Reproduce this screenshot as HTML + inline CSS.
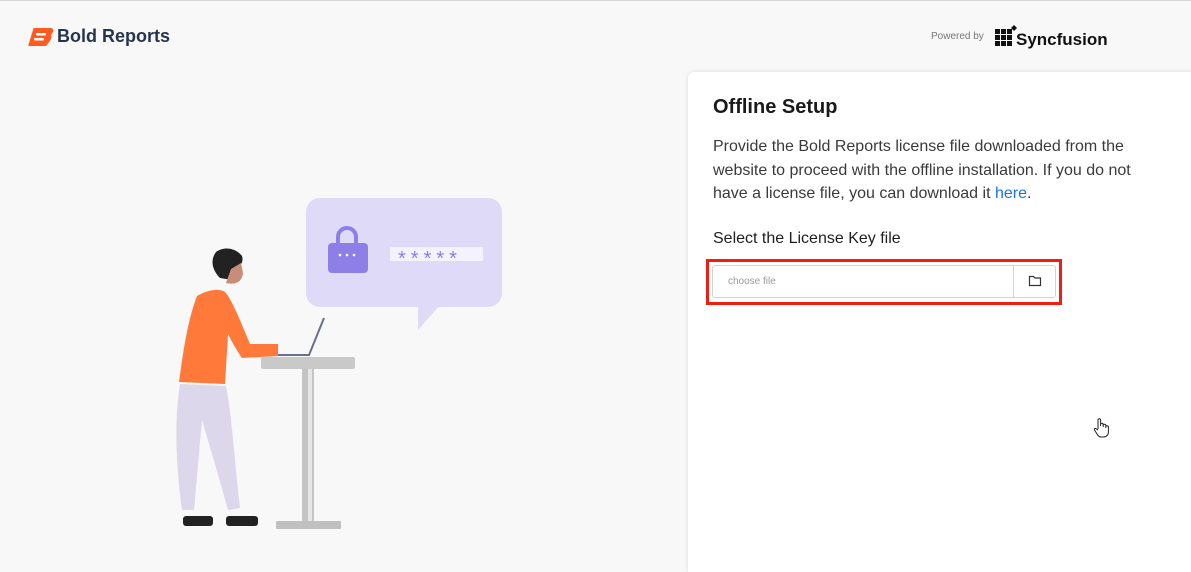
<!DOCTYPE html>
<html><head><meta charset="utf-8"><style>
*{margin:0;padding:0;box-sizing:border-box}
body{width:1191px;height:564px;background:#f8f8f8;font-family:"Liberation Sans",Arial,sans-serif;position:relative;overflow:hidden;border-top:1px solid #d6d6d6}
.abs{position:absolute}
.panel{left:688px;top:71px;width:510px;height:500px;background:#fff;border-radius:6px 0 0 0;box-shadow:0 0 4px rgba(0,0,0,.12)}
.t{color:#1f1f1f}
</style></head><body>
<svg class="abs" style="left:28px;top:26px" width="26" height="20" viewBox="0 0 26 20"><path d="M6 1h16c3 0 4 2 3 4l-2 3c1 2 0 5-2 7l-3 4H2c-2 0-2-1-1-3L5 3c0-1 1-2 1-2z" fill="#ff5a1f"/><rect x="8" y="6" width="10" height="2.5" rx="1" fill="#fff"/><rect x="6" y="11" width="10" height="2.5" rx="1" fill="#fff"/></svg>
<div class="abs" style="left:57px;top:25px;font-size:18px;font-weight:bold;color:#27344f">Bold Reports</div>
<div class="abs" style="left:931px;top:30px;font-size:10px;color:#777">Powered by</div>
<svg class="abs" style="left:995px;top:24px" width="24" height="22" viewBox="0 0 24 22"><g fill="#111"><rect x="0" y="4" width="5" height="5"/><rect x="6" y="4" width="5" height="5"/><rect x="0" y="10" width="5" height="5"/><rect x="6" y="10" width="5" height="5"/><rect x="12" y="10" width="5" height="5"/><rect x="0" y="16" width="5" height="5"/><rect x="6" y="16" width="5" height="5"/><rect x="12" y="16" width="5" height="5"/><rect x="12" y="4" width="5" height="5"/><path d="M19 0l3 3-3 3-3-3z"/></g></svg>
<div class="abs" style="left:1016px;top:29px;font-size:17px;font-weight:bold;color:#111;letter-spacing:0px">Syncfusion</div>

<svg class="abs" style="left:160px;top:190px" width="360" height="350" viewBox="0 0 360 350">
<rect x="146" y="7" width="196" height="109" rx="14" fill="#dedaf7"/>
<path d="M258 114l0 25 22-25z" fill="#dedaf7"/>
<path d="M178 53v-7a9 9 0 0 1 18 0v7" stroke="#8d7ee8" stroke-width="4" fill="none"/>
<rect x="168" y="52" width="40" height="30" rx="4" fill="#8d7ee8"/>
<g fill="#fff"><circle cx="180" cy="64" r="1.3"/><circle cx="187" cy="64" r="1.3"/><circle cx="194" cy="64" r="1.3"/></g>
<rect x="230" y="56" width="93" height="14" fill="#f4f2fd"/>
<text x="238" y="74" font-size="20" fill="#8d7ee8" font-family="Liberation Sans" letter-spacing="5">*****</text>
<path d="M164 127l-15 37h-40" stroke="#6a6f8a" stroke-width="2" fill="none"/>
<rect x="101" y="166" width="94" height="12" rx="2" fill="#c9c9c9"/>
<rect x="142" y="178" width="12" height="152" fill="#c4c4c4"/>
<rect x="148" y="178" width="4" height="152" fill="#e6e6e6"/>
<rect x="116" y="330" width="65" height="8" rx="1" fill="#c0c0c0"/>
<path d="M60 87c-8-8-10-18-4-26 8-6 20-4 26 4 2 6-2 10-6 14l-4 10z" fill="#222"/>
<path d="M66 92c8 2 16 0 17-10l-2-10-10 6z" fill="#c88d78"/>
<path d="M37 105c10-6 22-8 28-4 6 6 16 30 25 52l28 0 0 12-36 2c-8-12-12-20-14-24l-3 50-46-2c4-28 8-60 18-86z" fill="#ff7a3a"/>
<path d="M20 193l46 2c6 30 8 70 14 122l-12 2c-10-36-20-70-26-90l-8 90h-12c-6-42-8-90-2-126z" fill="#ddd7ec"/>
<rect x="23" y="325" width="30" height="10" rx="3" fill="#222"/>
<rect x="66" y="325" width="32" height="10" rx="3" fill="#222"/>
</svg>

<div class="abs panel"></div>
<div class="abs t" style="left:713px;top:95px;font-size:20px;font-weight:bold;color:#1a1a1a">Offline Setup</div>
<div class="abs" style="left:713px;top:134px;width:450px;font-size:16px;line-height:23.5px;color:#3a3a3a">Provide the Bold Reports license file downloaded from the website to proceed with the offline installation. If you do not have a license file, you can download it <span style="color:#1a73e8">here</span>.</div>
<div class="abs t" style="left:713px;top:229px;font-size:16px">Select the License Key file</div>
<div class="abs" style="left:706px;top:258px;width:356px;height:46px;border:3px solid #f01e10"></div>
<div class="abs" style="left:712px;top:264px;width:344px;height:33px;border:1px solid #d3d3d3;border-radius:3px;background:#fff"></div>
<div class="abs" style="left:1013px;top:264px;width:1px;height:33px;background:#d3d3d3"></div>
<div class="abs" style="left:728px;top:275px;font-size:10px;color:#9b9b9b">choose file</div>
<svg class="abs" style="left:1028px;top:274px" width="14" height="12" viewBox="0 0 14 12"><path d="M1.5 1.5h4l1.5 1.5h5.5v7.5h-11z" fill="none" stroke="#333" stroke-width="1.2"/></svg>
<svg class="abs" style="left:1093px;top:416px" width="18" height="22" viewBox="0 0 18 22"><path d="M5 12V3a1.3 1.3 0 0 1 2.6 0v6 M7.6 9V7.5a1.3 1.3 0 0 1 2.6 0V10 M10.2 10V8.5a1.3 1.3 0 0 1 2.6 0V11 M12.8 11v-1a1.3 1.3 0 0 1 2.6 0v5c0 3-2 5-5 5H8c-2 0-3-1-4-3l-2.5-4c-.7-1 .5-2 1.5-1.3L5 13" fill="#fff" stroke="#222" stroke-width="1"/></svg>
</body></html>
